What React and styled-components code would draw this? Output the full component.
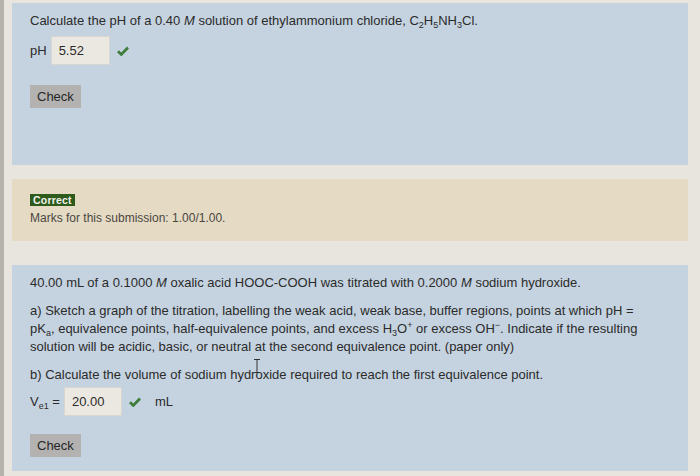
import styled, { createGlobalStyle } from "styled-components";

const GlobalStyle = createGlobalStyle`
  html, body {
    margin: 0;
    padding: 0;
    background: #e8e5df;
  }
  body {
    font-family: "Liberation Sans", Arial, sans-serif;
    color: #2b2b2b;
  }
  sub, sup {
    font-size: 9px;
    line-height: 0;
    vertical-align: baseline;
    position: relative;
  }
  sub { top: 3px; }
  sup { top: -5px; }
`;

const Page = styled.div`
  position: relative;
  width: 700px;
  height: 476px;
  box-sizing: border-box;
  border-left: 4px solid #b4b2ac;
  padding: 3px 12px 0 8px;
  display: flex;
  flex-direction: column;
  overflow: hidden;
`;

const Panel = styled.div`
  background: ${(p) => p.$bg};
  padding: ${(p) => p.$pad};
  height: ${(p) => p.$h}px;
  margin-top: ${(p) => p.$mt || 0}px;
  box-sizing: border-box;
  font-size: 13px;
  line-height: 18px;
`;

const Text = styled.p`
  margin: ${(p) => p.$mt || 0}px 0 0 0;
  max-width: ${(p) => p.$w || 640}px;
`;

const AnswerRow = styled.div`
  display: flex;
  align-items: center;
  margin-top: ${(p) => p.$mt}px;
  gap: 4px;
`;

const Label = styled.span``;

const Input = styled.div`
  width: ${(p) => p.$w}px;
  height: 29px;
  box-sizing: border-box;
  background: #ebe8e2;
  border: 1px solid #d8d6d0;
  padding: 5px 7px 0;
  font-size: 13px;
`;

const Tick = styled.svg`
  width: 12px;
  height: 10px;
  margin: 0 ${(p) => p.$mr || 0}px 0 3px;
`;

const CheckButton = styled.div`
  display: inline-block;
  margin-top: ${(p) => p.$mt}px;
  background: #b3b2b0;
  color: #272727;
  padding: 3px 7px 2px;
  font-size: 13px;
  line-height: 18px;
`;

const Badge = styled.span`
  display: inline-block;
  background: #2e5a1c;
  color: #f2f2ec;
  font-weight: bold;
  font-size: 10.5px;
  line-height: 12px;
  padding: 0 3px;
  letter-spacing: 0.2px;
`;

const Marks = styled.div`
  color: #4a4640;
  font-size: 12px;
  line-height: 16px;
  margin-top: 1px;
`;

const Cursor = styled.svg`
  position: absolute;
  left: 249px;
  top: 359px;
  width: 8px;
  height: 14px;
`;

function Check({ mr }) {
  return (
    <Tick viewBox="0 0 12 10" $mr={mr}>
      <path d="M1 5.2 L4.3 8.4 L11 1.6" fill="none" stroke="#3e7d3a" strokeWidth="2.8" />
    </Tick>
  );
}

export default function App() {
  return (
    <>
      <GlobalStyle />
      <Page>
        <Panel $bg="#c5d3e0" $pad="9px 18px" $h={162}>
          <Text>
            Calculate the pH of a 0.40 <i>M</i> solution of ethylammonium chloride, C<sub>2</sub>H
            <sub>5</sub>NH<sub>3</sub>Cl.
          </Text>
          <AnswerRow $mt={6}>
            <Label>pH</Label>
            <Input $w={59}>5.52</Input>
            <Check />
          </AnswerRow>
          <CheckButton $mt={20}>Check</CheckButton>
        </Panel>

        <Panel $bg="#e5dbc5" $pad="12px 18px" $h={62} $mt={14}>
          <Badge>Correct</Badge>
          <Marks>Marks for this submission: 1.00/1.00.</Marks>
        </Panel>

        <Panel $bg="#c5d3e0" $pad="9px 18px" $h={206} $mt={24}>
          <Text>
            40.00 mL of a 0.1000 <i>M</i> oxalic acid HOOC-COOH was titrated with 0.2000 <i>M</i> sodium
            hydroxide.
          </Text>
          <Text $mt={10} $w={622}>
            a) Sketch a graph of the titration, labelling the weak acid, weak base, buffer regions, points at
            which pH = pK<sub>a</sub>, equivalence points, half-equivalence points, and excess H<sub>3</sub>O
            <sup>+</sup> or excess OH<sup>−</sup>. Indicate if the resulting solution will be acidic, basic, or
            neutral at the second equivalence point. (paper only)
          </Text>
          <Text $mt={10}>b) Calculate the volume of sodium hydroxide required to reach the first equivalence point.</Text>
          <AnswerRow $mt={3}>
            <Label>
              V<sub>e1</sub> =
            </Label>
            <Input $w={58}>20.00</Input>
            <Check mr={10} />
            <Label>mL</Label>
          </AnswerRow>
          <CheckButton $mt={18}>Check</CheckButton>
        </Panel>

        <Cursor viewBox="0 0 8 14">
          <path d="M1 0.5 H7 M4 0.5 V13.5 M1 13.5 H7" fill="none" stroke="#333" strokeWidth="1" />
        </Cursor>
      </Page>
    </>
  );
}
